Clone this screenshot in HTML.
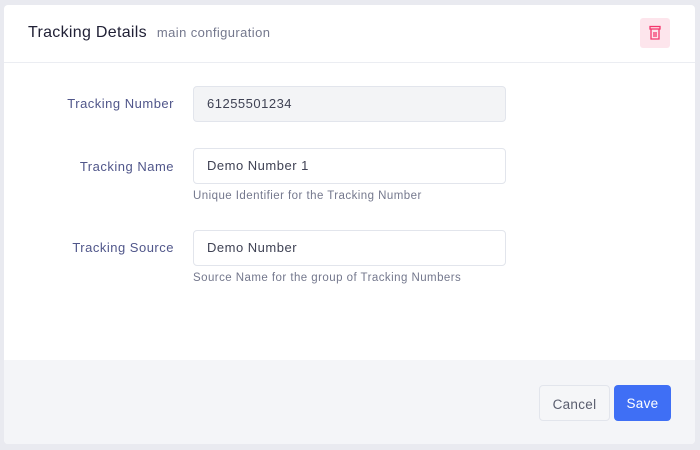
<!DOCTYPE html>
<html><head><style>
body{margin:0;width:700px;height:450px;background:#e9eaf0;font-family:"Liberation Sans",sans-serif;position:relative;overflow:hidden}
.card{position:absolute;left:4px;top:5px;width:691px;height:439px;background:#fff;border-radius:4px;overflow:hidden}
.hdr{position:absolute;left:0;top:0;right:0;height:57px;border-bottom:1px solid #ebedf2}
.t{position:absolute;left:24px;top:19px;font-size:16px;color:#212136;letter-spacing:0.3px}
.t span{font-size:13px;color:#74788d;margin-left:10px;letter-spacing:0.4px}
.del{position:absolute;left:636px;top:13px;width:30px;height:30px;background:#fde5ec;border-radius:3px}
.lbl{position:absolute;right:521px;font-size:13px;color:#50568a;text-align:right;letter-spacing:0.5px}
.in{position:absolute;left:189px;border:1px solid #e2e5ec;border-radius:4px;font-size:13px;color:#3f4254;line-height:34px;padding-left:13px;box-sizing:border-box;width:313px;height:36px;letter-spacing:0.5px}
.help{position:absolute;left:189px;font-size:11.5px;color:#74788d;letter-spacing:0.45px}
.ftr{position:absolute;left:0;right:0;top:355px;bottom:0;background:#f4f5f8}
.btn{position:absolute;top:380px;height:36px;border-radius:4px;font-size:13.5px;line-height:37px;text-align:center;box-sizing:border-box;letter-spacing:0.3px}
</style></head><body>
<div class="card">
<div class="hdr"><div class="t">Tracking Details<span>main configuration</span></div>
<div class="del"><svg width="30" height="30" viewBox="0 0 30 30"><g fill="none" stroke="#f4376d" stroke-width="1.3"><rect x="10" y="8.5" width="10" height="2.5"/><path d="M11 11v10h8v-10M14 14v5M16 14v5"/></g></svg></div></div>
<div class="lbl" style="top:91px">Tracking Number</div>
<div class="in" style="top:81px;background:#f3f4f6">61255501234</div>
<div class="lbl" style="top:154px">Tracking Name</div>
<div class="in" style="top:143px">Demo Number 1</div>
<div class="help" style="top:185px">Unique Identifier for the Tracking Number</div>
<div class="lbl" style="top:235px">Tracking Source</div>
<div class="in" style="top:225px">Demo Number</div>
<div class="help" style="top:267px">Source Name for the group of Tracking Numbers</div>
<div class="ftr"></div>
<div class="btn" style="left:535px;width:71px;border:1px solid #e2e5ec;background:#f5f6f8;color:#595d6e">Cancel</div>
<div class="btn" style="left:610px;width:57px;background:#3f6ff5;color:#fff">Save</div>
</div>
</body></html>
